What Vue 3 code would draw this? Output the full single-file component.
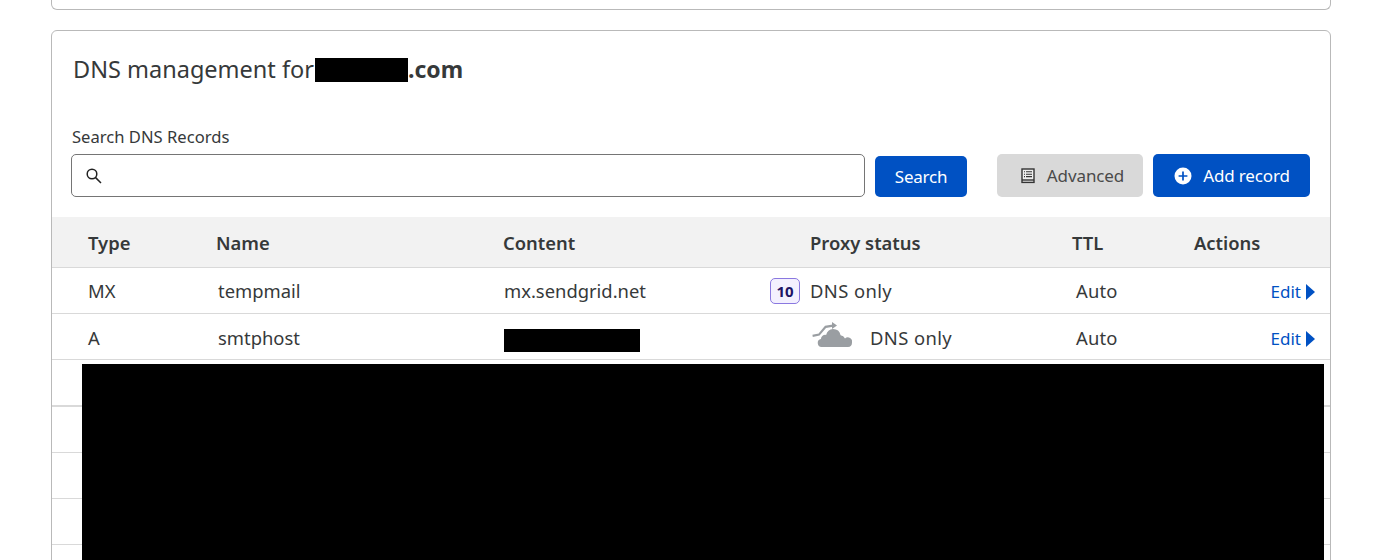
<script setup>
const rows = [
  { type: 'MX', name: 'tempmail', content: 'mx.sendgrid.net', priority: 10, proxy: 'DNS only', ttl: 'Auto' },
  { type: 'A', name: 'smtphost', hidden: true, cloud: true, proxy: 'DNS only', ttl: 'Auto' },
]
const blanks = [1, 2, 3, 4]
</script>

<template>
  <div class="page">
    <div class="top-card"></div>
    <section class="card">
      <h1 class="title">DNS management for<span class="redact-name"></span><b>.com</b></h1>
      <div class="toolbar">
        <div class="search-block">
          <label class="label" for="q">Search DNS Records</label>
          <div class="search-row">
            <div class="input">
              <svg class="search-icon" viewBox="0 0 18 18" width="18" height="18" fill="none" stroke="#222" stroke-width="1.5">
                <circle cx="7" cy="7" r="4.8" />
                <path d="M10.6 10.6 16 16" />
              </svg>
              <input id="q" type="text" />
            </div>
            <button class="btn primary search-btn">Search</button>
          </div>
        </div>
        <div class="actions">
          <button class="btn grey">
            <svg viewBox="0 0 14 16" width="14" height="16" fill="none" stroke="#333" stroke-width="1.4">
              <rect x="1" y="1" width="12" height="13.4" fill="#eee" />
              <path d="M1 12h12" />
              <path d="M3 3.8h1M5 3.8h6M3 6.2h1M5 6.2h6M3 8.6h1M5 8.6h6" stroke-width="1.1" />
            </svg>
            Advanced
          </button>
          <button class="btn primary add">
            <svg viewBox="0 0 18 18" width="18" height="18">
              <circle cx="9" cy="9" r="8.5" fill="#fff" />
              <path d="M9 4.6v8.8M4.6 9h8.8" stroke="#0051c3" stroke-width="1.7" />
            </svg>
            Add record
          </button>
        </div>
      </div>

      <div class="table">
        <div class="row head">
          <span>Type</span><span>Name</span><span>Content</span><span>Proxy status</span><span>TTL</span><span>Actions</span>
        </div>
        <div v-for="r in rows" :key="r.name" class="row body" :class="{ low: r.cloud }">
          <span class="c-type">{{ r.type }}</span>
          <span class="c-name">{{ r.name }}</span>
          <span class="c-content">
            <span v-if="r.hidden" class="redact-ip"></span>
            <template v-else>{{ r.content }}</template>
            <span v-if="r.priority" class="badge">{{ r.priority }}</span>
          </span>
          <span class="c-proxy" :class="{ cloudy: r.cloud }">
            <svg v-if="r.cloud" class="cloud" viewBox="0 0 40 25" width="40" height="25">
              <path d="M9.5 25a4 4 0 0 1-.6-7.9 4.4 4.4 0 0 1 5.2-4.2A8 8 0 0 1 21 7a7.8 7.8 0 0 1 7.6 6.2 6 6 0 0 1 4.4 3.3 4.3 4.3 0 0 1 7 4.2A4.3 4.3 0 0 1 36 25z" fill="#9a9ea2" />
              <path d="M0.6 13.8 7 12.6 13.6 4.8 21 3.6" fill="none" stroke="#9a9ea2" stroke-width="2.2" />
              <path d="M20 0 25 3.4 20 7z" fill="#9a9ea2" />
            </svg>
            <span class="proxy-text">{{ r.proxy }}</span>
          </span>
          <span class="c-ttl">{{ r.ttl }}</span>
          <a class="c-edit">Edit<i class="caret"></i></a>
        </div>
        <div v-for="n in blanks" :key="n" class="row blank" :class="{ thick: n === 1 }"></div>
        <div class="redact-block"></div>
      </div>
    </section>
  </div>
</template>

<style>
html, body { margin: 0; background: #fff; overflow: hidden; }
</style>

<style scoped>
.page {
  height: 560px;
  overflow: hidden;
  padding: 0 63px 0 51px;
  font-family: "Noto Sans", "Open Sans", sans-serif;
  color: #36393a;
  box-sizing: border-box;
}
.top-card {
  height: 10px;
  margin-top: -1px;
  border: 1px solid #b9b9b9;
  border-top: 0;
  border-radius: 0 0 6px 6px;
  margin-bottom: 20px;
}
.card {
  border: 1px solid #b9b9b9;
  border-radius: 6px;
  height: 600px;
  position: relative;
  box-sizing: border-box;
}
.title {
  margin: 0;
  padding: 20px 20px 0 21px;
  font-size: 23.5px;
  line-height: 36px;
  height: 36px;
  font-weight: 400;
  display: flex;
  align-items: center;
}
.title b { font-weight: 700; font-size: 23px; }
.redact-name { display: inline-block; width: 93px; height: 24px; background: #000; margin-left: 1px; margin-top: 2px; }
.toolbar {
  display: flex;
  justify-content: space-between;
  align-items: flex-end;
  padding: 0 20px 0 19px;
  margin-top: 39px;
}
.label { display: block; font-size: 16.6px; line-height: 22px; margin: 0 0 6px 1px; }
.search-row { display: flex; align-items: flex-end; gap: 10px; }
.input {
  width: 794px;
  height: 43px;
  box-sizing: border-box;
  border: 1px solid #757575;
  border-radius: 5px;
  display: flex;
  align-items: center;
  padding-left: 13px;
  gap: 6px;
}
.input input { flex: 1; border: 0; outline: 0; background: transparent; }
.btn {
  height: 43px;
  box-sizing: border-box;
  border: 0;
  border-radius: 5px;
  font-family: inherit;
  font-size: 17px;
  display: flex;
  align-items: center;
  justify-content: center;
  letter-spacing: -0.25px;
  padding: 0;
}
.primary { background: #0051c3; color: #fff; }
.search-btn { width: 92px; height: 41px; }
.actions { display: flex; gap: 10px; }
.grey { background: #d9d9d9; color: #4a4a4a; width: 146px; gap: 12px; letter-spacing: -0.1px; padding-left: 5px; }
.add { width: 157px; gap: 11px; letter-spacing: -0.15px; padding-left: 1px; }
.table { position: relative; margin-top: 20px; }
.row {
  display: grid;
  grid-template-columns: 128px 287px 307px 262px 122px 1fr;
  padding-left: 36px;
  align-items: center;
  box-sizing: border-box;
  border-bottom: 1px solid #d9d9d9;
  font-size: 18.4px;
}
.head { height: 51px; background: #f2f2f2; font-weight: 600; font-size: 18.4px; }
.body { height: 46px; }
.low { padding-top: 2px; }
.blank { height: 46px; }
.thick { height: 47px; border-bottom-width: 2px; }
.c-name { padding-left: 2px; }
.c-content { padding-left: 1px; position: relative; display: block; }
.c-ttl { padding-left: 4px; letter-spacing: 0.2px; }
.badge {
  position: absolute;
  right: 10px;
  top: 0;
  width: 30px;
  height: 26px;
  box-sizing: border-box;
  border: 1px solid #8a78e0;
  border-radius: 5px;
  background: #f3f0fe;
  color: #1d1464;
  font-size: 15px;
  font-weight: 700;
  display: flex;
  align-items: center;
  justify-content: center;
}
.c-proxy { display: flex; align-items: center; }
.proxy-text { letter-spacing: 0.4px; }
.cloudy { gap: 18px; margin-left: 2px; }
.cloud { margin-top: -7px; }
.redact-ip { display: block; width: 136px; height: 23px; background: #000; margin-top: 6px; }
.c-edit {
  color: #0051c3;
  font-size: 17px;
  justify-self: end;
  display: flex;
  align-items: center;
  gap: 5px;
  padding: 2px 15px 0 0;
}
.caret {
  width: 0;
  height: 0;
  border-left: 9px solid #0051c3;
  border-top: 8.5px solid transparent;
  border-bottom: 8.5px solid transparent;
}
.redact-block {
  position: absolute;
  left: 30px;
  top: 147px;
  width: 1242px;
  height: 300px;
  background: #000;
}
</style>
